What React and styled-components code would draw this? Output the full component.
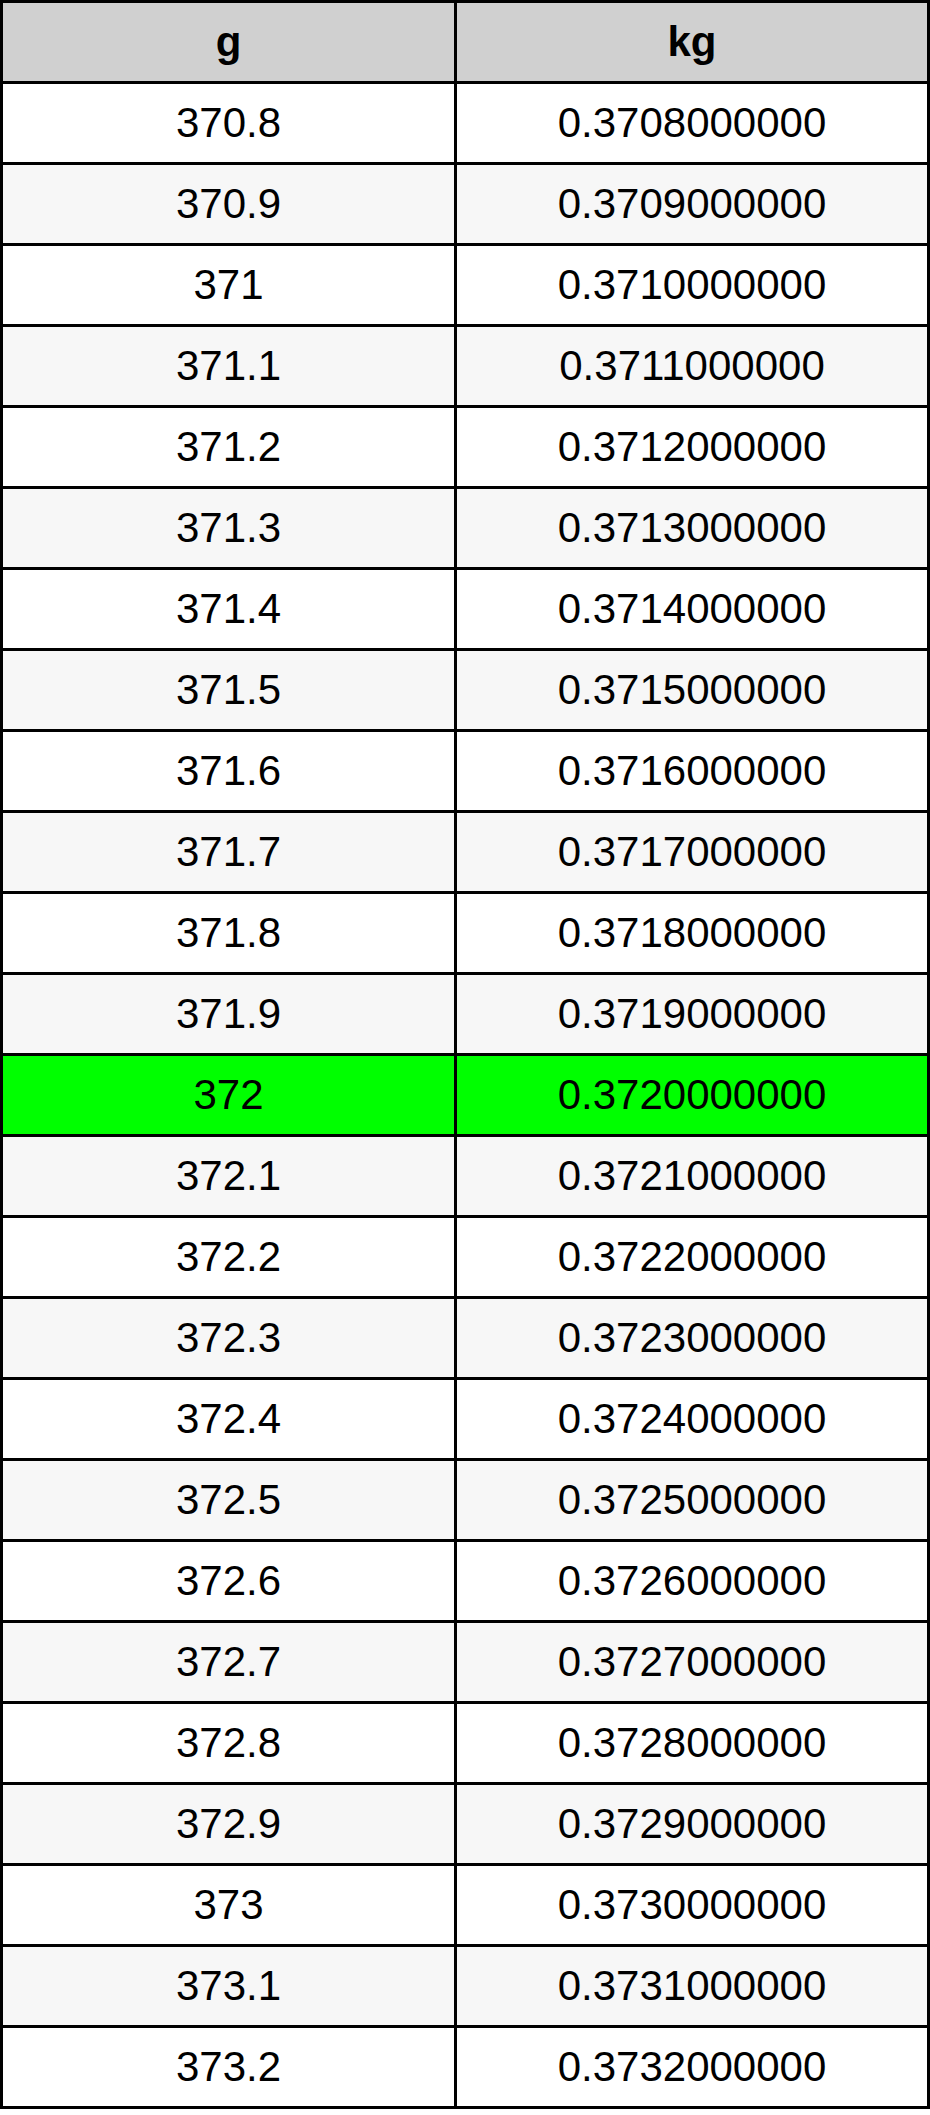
import React from "react";
import styled, { createGlobalStyle } from "styled-components";

const GlobalStyle = createGlobalStyle`
  html, body {
    margin: 0;
    padding: 0;
    background: #ffffff;
  }
`;

const Table = styled.div`
  display: grid;
  grid-template-columns: 451px 470px;
  grid-auto-rows: 78px;
  gap: 3px;
  padding: 3px;
  width: 930px;
  box-sizing: border-box;
  background: #000000;
  font-family: "Liberation Sans", Arial, sans-serif;
`;

const Cell = styled.div`
  display: flex;
  align-items: center;
  justify-content: center;
  font-size: 42px;
  color: #000000;
  font-weight: ${(p) => (p.$head ? "bold" : "normal")};
  background: ${(p) =>
    p.$head ? "#d0d0d0" : p.$hit ? "#00ff00" : p.$odd ? "#f7f7f7" : "#ffffff"};
`;

const grams = [
  "370.8", "370.9", "371", "371.1", "371.2", "371.3", "371.4", "371.5",
  "371.6", "371.7", "371.8", "371.9", "372", "372.1", "372.2", "372.3",
  "372.4", "372.5", "372.6", "372.7", "372.8", "372.9", "373", "373.1",
  "373.2",
];

const toKg = (g) => (parseFloat(g) / 1000).toFixed(10);

const App = () => {
  return (
    <>
      <GlobalStyle />
      <Table>
        <Cell $head>g</Cell>
        <Cell $head>kg</Cell>
        {grams.map((g, i) => {
          const hit = g === "372";
          const odd = i % 2 === 1;
          return (
            <React.Fragment key={g}>
              <Cell $hit={hit} $odd={odd}>{g}</Cell>
              <Cell $hit={hit} $odd={odd}>{toKg(g)}</Cell>
            </React.Fragment>
          );
        })}
      </Table>
    </>
  );
};

export default App;
